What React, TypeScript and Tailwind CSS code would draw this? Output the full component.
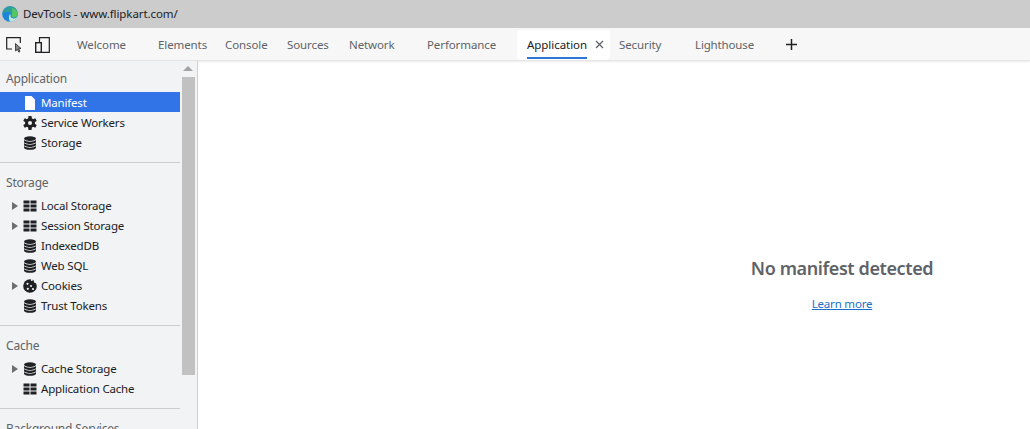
import React from "react";

const ff = "font-['Noto_Sans','Open_Sans',sans-serif]";

function Db() {
  return (
    <svg width="14" height="14" viewBox="0 0 14 14" fill="#202124">
      <ellipse cx="7" cy="2.600" rx="6" ry="2.400" />
      <path d="M1 4C2 5.300 4.400 5.700 7 5.700s5-.4 6-1.700v1.700C13 7 10.300 7.900 7 7.900S1 7 1 5.700z" />
      <path d="M1 7C2 8.300 4.400 8.700 7 8.700s5-.4 6-1.700v1.700C13 10 10.300 10.900 7 10.900S1 10 1 8.700z" />
      <path d="M1 10C2 11.300 4.400 11.700 7 11.700s5-.4 6-1.700v1.400C13 12.800 10.300 13.700 7 13.700s-6-.9-6-2.300z" />
    </svg>
  );
}

function Grid() {
  return (
    <svg width="14" height="12" viewBox="0 0 14 12" fill="#202124">
      <rect x="0.500" y="0.500" width="6" height="3" />
      <rect x="7.500" y="0.500" width="6" height="3" />
      <rect x="0.500" y="4.500" width="6" height="3" />
      <rect x="7.500" y="4.500" width="6" height="3" />
      <rect x="0.500" y="8.500" width="6" height="3" />
      <rect x="7.500" y="8.500" width="6" height="3" />
    </svg>
  );
}

function Gear() {
  return (
    <svg width="14" height="14" viewBox="0 0 14 14">
      <g fill="#202124">
        <circle cx="7" cy="7" r="5" />
        <rect x="5.300" y="0.100" width="3.400" height="13.800" rx="0.600" />
        <rect x="5.300" y="0.100" width="3.400" height="13.800" rx="0.600" transform="rotate(60 7 7)" />
        <rect x="5.300" y="0.100" width="3.400" height="13.800" rx="0.600" transform="rotate(120 7 7)" />
      </g>
      <circle cx="7" cy="7" r="2" fill="#f1f3f4" />
    </svg>
  );
}

function Cookie() {
  return (
    <svg width="14" height="14" viewBox="0 0 14 14">
      <circle cx="7" cy="7" r="6.800" fill="#202124" />
      <circle cx="13" cy="2" r="2.200" fill="#f1f3f4" />
      <circle cx="8.800" cy="1" r="1" fill="#f1f3f4" />
      <circle cx="4.500" cy="4.800" r="1.100" fill="#f1f3f4" />
      <circle cx="8" cy="7" r="1" fill="#f1f3f4" />
      <circle cx="4.800" cy="9.800" r="1.100" fill="#f1f3f4" />
      <circle cx="10" cy="10" r="1.100" fill="#f1f3f4" />
    </svg>
  );
}

function Doc() {
  return (
    <svg width="12" height="14" viewBox="0 0 12 14" fill="#ffffff">
      <path d="M1 0h6.500L11 3.500V14H1z" />
    </svg>
  );
}

function Row({ label, icon, arrow, selected }: { label: string; icon: React.ReactNode; arrow?: boolean; selected?: boolean }) {
  return (
    <div className={`flex h-5 w-[180px] items-center text-[11.5px] ${selected ? "bg-[#3174e8] pt-[1px] text-white" : "text-[#202124]"}`}>
      <div className="flex w-[22px] justify-end pr-[4px]">
        {arrow && <div className="h-0 w-0 border-y-[4px] border-l-[6px] border-y-transparent border-l-[#6e6e6e]" />}
      </div>
      <div className="flex w-[19px] justify-center pr-[4px]">{icon}</div>
      <span className="tracking-[-0.18px] whitespace-nowrap">{label}</span>
    </div>
  );
}

function Header({ label, className }: { label: string; className: string }) {
  return (
    <div className={`w-[180px] pl-[6px] text-[12px] leading-5 tracking-[-0.2px] whitespace-nowrap text-[#5f6368] ${className}`}>{label}</div>
  );
}

const Divider = ({ className }: { className: string }) => <div className={`h-px w-[180px] bg-[#cdcdcd] ${className}`} />;

const tabs: [string, string][] = [
  ["Welcome", "w-[81px]"],
  ["Elements", "w-[67px]"],
  ["Console", "w-[62px]"],
  ["Sources", "w-[62px]"],
  ["Network", "w-[78px]"],
  ["Performance", "w-[90px]"],
];

export default function App() {
  return (
    <div className={`flex h-[429px] w-[1030px] flex-col overflow-hidden bg-white ${ff}`}>
      <div className="flex h-[28px] shrink-0 items-center bg-[#cccccc] pl-[2px]">
        <svg width="16" height="16" viewBox="0 0 16 16">
          <circle cx="8" cy="8" r="7.800" fill="#1b86d8" />
          <path d="M.5 7.500C1.500 3 4.800.2 8 .2c4.200 0 7.800 3.400 7.800 7.600 0 2.400-1.800 3.600-3.800 3.600-1.700 0-2.700-.9-2.300-2 .5-1.700-.6-3.400-3-3.400C4 6 2 6.500.5 7.500z" fill="#2f9f9a" />
          <path d="M10 2c3 .9 5.800 3.300 5.800 5.800 0 2.400-1.800 3.600-3.800 3.600-1.700 0-2.700-.9-2.300-2C10.200 8 10.600 5 10 2z" fill="#55c75f" />
          <path d="M8.500 15.800c3.200-.2 5.800-2 7-4.700-1 .9-2.300 1.300-3.700 1.300-2.300 0-3.800-1.300-3.300-3.100.1-.5-.1-1-.4-1.300-1.700 1.800-1.600 6.200.4 7.800z" fill="#bfe6d8" />
        </svg>
        <span className="ml-[5px] text-[11.5px] tracking-[-0.08px] text-[#202124]">DevTools - www.flipkart.com/</span>
      </div>

      <div className="flex h-[33px] shrink-0 items-center border-b border-[#e4e4e4] bg-[#f7f7f7] pt-[1px] shadow-[0_1px_2px_rgba(0,0,0,0.08)]">
        <div className="flex w-[77px] shrink-0 items-center pl-[6px]">
          <svg width="17" height="17" viewBox="0 0 17 17" fill="none">
            <path d="M6 13H.7V1.700h13.600V7" stroke="#202124" strokeWidth="1.200" />
            <path d="M9.500 7.500l.1 7.500 1.800-1.600 1.400 2.700 1.200-.6-1.400-2.700 2.400-.3z" fill="#8a8a8a" stroke="#202124" strokeWidth="0.800" />
          </svg>
          <svg className="ml-[12px]" width="15" height="16" viewBox="0 0 15 16" fill="none">
            <path d="M4.500 5V.7h9.800v14.600H6" stroke="#202124" strokeWidth="1.200" />
            <rect x="0.700" y="5.700" width="5.600" height="9.600" stroke="#202124" strokeWidth="1.400" />
          </svg>
        </div>
        {tabs.map(([t, w]) => (
          <div key={t} className={`shrink-0 text-[11.5px] tracking-[-0.1px] text-[#5f6368] ${w}`}>{t}</div>
        ))}
        <div className="flex h-[30px] w-[93px] shrink-0 items-center rounded-sm bg-white pl-[10px]">
          <div className="relative flex h-full items-center text-[11.5px] tracking-[-0.05px] text-[#202124]">
            Application
            <div className="absolute right-0 bottom-[1px] left-0 h-[2px] bg-[#2b78d4]" />
          </div>
          <svg className="ml-[8px]" width="9" height="9" viewBox="0 0 9 9" stroke="#5f6368" strokeWidth="1.300">
            <path d="M1 1l7 7M8 1L1 8" />
          </svg>
        </div>
        <div className="w-[85px] shrink-0 pl-[9px] text-[11.5px] tracking-[-0.1px] text-[#5f6368]">Security</div>
        <div className="w-[91px] shrink-0 text-[11.5px] tracking-[-0.15px] text-[#5f6368]">Lighthouse</div>
        <svg width="11" height="11" viewBox="0 0 11 11" stroke="#202124" strokeWidth="1.500">
          <path d="M5.500 0v11M0 5.500h11" />
        </svg>
      </div>

      <div className="flex min-h-0 flex-1">
        <div className="relative h-full w-[198px] shrink-0 overflow-hidden border-r border-[#d0d0d0] bg-[#f1f3f4]">
          <Header label="Application" className="mt-[8px]" />
          <div className="mt-[3px]">
            <Row label="Manifest" icon={<Doc />} selected />
            <div className="mt-[1px]">
              <Row label="Service Workers" icon={<Gear />} />
              <Row label="Storage" icon={<Db />} />
            </div>
          </div>
          <Divider className="mt-[9px]" />
          <Header label="Storage" className="mt-[10px]" />
          <div className="mt-[3px]">
            <Row label="Local Storage" icon={<Grid />} arrow />
            <Row label="Session Storage" icon={<Grid />} arrow />
            <Row label="IndexedDB" icon={<Db />} />
            <Row label="Web SQL" icon={<Db />} />
            <Row label="Cookies" icon={<Cookie />} arrow />
            <Row label="Trust Tokens" icon={<Db />} />
          </div>
          <Divider className="mt-[9px]" />
          <Header label="Cache" className="mt-[10px]" />
          <div className="mt-[3px]">
            <Row label="Cache Storage" icon={<Db />} arrow />
            <Row label="Application Cache" icon={<Grid />} />
          </div>
          <Divider className="mt-[9px]" />
          <Header label="Background Services" className="mt-[10px]" />
          <div className="absolute top-0 right-[1px] h-full w-[15px] bg-[#f1f3f4]">
            <div className="absolute top-[5px] left-[2px] h-0 w-0 border-x-[5px] border-b-[5px] border-x-transparent border-b-[#a3a3a3]" />
            <div className="absolute top-[16px] left-[1px] h-[298px] w-[13px] bg-[#c1c1c1]" />
          </div>
        </div>
        <div className="flex flex-1 flex-col items-center pt-[195px] pl-[456px]">
          <div className="text-[18px] leading-6 font-semibold tracking-[-0.4px] whitespace-nowrap text-[#5f6368]">No manifest detected</div>
          <a className="mt-[15px] text-[11.5px] tracking-[-0.2px] text-[#1a6fc9] underline">Learn more</a>
        </div>
      </div>
    </div>
  );
}
